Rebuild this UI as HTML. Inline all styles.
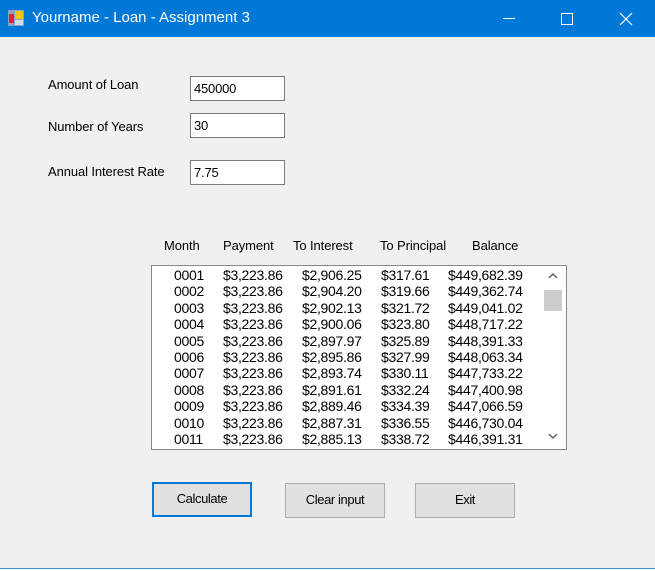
<!DOCTYPE html>
<html><head><style>
body{margin:0;width:655px;height:571px;overflow:hidden;background:#f0f0f0;position:relative;font-family:"Liberation Sans",sans-serif;color:#000}
.a{position:absolute}
.tb{background:#0078d7;left:0;top:0;width:655px;height:37px}
.lbl{font-size:13px;letter-spacing:-0.1px}
.in{background:#fff;border:1px solid #7a7a7a;width:95px;box-sizing:border-box;font-size:13px;padding:4px 0 0 3px;letter-spacing:-0.2px}
.btn{background:#e1e1e1;border:1px solid #adadad;box-sizing:border-box;width:100px;height:35px;font-size:13px;text-align:center;line-height:32px;letter-spacing:-0.4px}
.row{position:absolute;font-size:14px;line-height:16.4px;letter-spacing:-0.3px;white-space:pre}
</style></head><body>
<div class="a tb"></div>
<svg class="a" style="left:7px;top:9px" width="18" height="18" viewBox="0 0 18 18"><rect x="1" y="1" width="16" height="16" fill="#8aa3c8"/><rect x="2" y="5" width="5" height="9" fill="#d23"/><rect x="8" y="2" width="8" height="8" fill="#f7c600"/><rect x="8" y="11" width="8" height="5" fill="#cde"/></svg>
<div class="a" style="left:32px;top:9px;color:#fff;font-size:15px">Yourname - Loan - Assignment 3</div>
<div class="a" style="left:503px;top:18px;width:12px;height:1px;background:#fff"></div>
<div class="a" style="left:561px;top:13px;width:10px;height:10px;border:1px solid #fff"></div>
<svg class="a" style="left:619px;top:12px" width="14" height="14"><path d="M1 1L13 13M13 1L1 13" stroke="#fff" stroke-width="1.2"/></svg>

<div class="a lbl" style="left:48px;top:77px">Amount of Loan</div>
<div class="a lbl" style="left:48px;top:119px">Number of Years</div>
<div class="a lbl" style="left:48px;top:164px">Annual Interest Rate</div>
<div class="a in" style="left:190px;top:76px;height:25px">450000</div>
<div class="a in" style="left:190px;top:113px;height:25px">30</div>
<div class="a in" style="left:190px;top:160px;height:25px">7.75</div>

<div class="a lbl" style="left:164px;top:238px">Month</div>
<div class="a lbl" style="left:223px;top:238px">Payment</div>
<div class="a lbl" style="left:293px;top:238px">To Interest</div>
<div class="a lbl" style="left:380px;top:238px">To Principal</div>
<div class="a lbl" style="left:472px;top:238px">Balance</div>

<div class="a" style="left:151px;top:265px;width:416px;height:185px;background:#fff;border:1px solid #828790;box-sizing:border-box"></div>
<div class="a" style="left:543px;top:266px;width:20px;height:183px;background:#fff"></div>
<svg class="a" style="left:548px;top:272px" width="10" height="8"><path d="M1 6L5 2L9 6" stroke="#606060" fill="none" stroke-width="1.5"/></svg>
<div class="a" style="left:544px;top:290px;width:18px;height:21px;background:#cdcdcd"></div>
<svg class="a" style="left:548px;top:432px" width="10" height="8"><path d="M1 2L5 6L9 2" stroke="#606060" fill="none" stroke-width="1.5"/></svg>
<div class="row" style="left:174px;top:267px">0001
0002
0003
0004
0005
0006
0007
0008
0009
0010
0011</div>
<div class="row" style="left:223px;top:267px">$3,223.86
$3,223.86
$3,223.86
$3,223.86
$3,223.86
$3,223.86
$3,223.86
$3,223.86
$3,223.86
$3,223.86
$3,223.86</div>
<div class="row" style="left:302px;top:267px">$2,906.25
$2,904.20
$2,902.13
$2,900.06
$2,897.97
$2,895.86
$2,893.74
$2,891.61
$2,889.46
$2,887.31
$2,885.13</div>
<div class="row" style="left:381px;top:267px">$317.61
$319.66
$321.72
$323.80
$325.89
$327.99
$330.11
$332.24
$334.39
$336.55
$338.72</div>
<div class="row" style="left:448px;top:267px">$449,682.39
$449,362.74
$449,041.02
$448,717.22
$448,391.33
$448,063.34
$447,733.22
$447,400.98
$447,066.59
$446,730.04
$446,391.31</div>

<div class="a btn" style="left:152px;top:482px;border:2px solid #0078d7;line-height:30px">Calculate</div>
<div class="a btn" style="left:285px;top:483px">Clear input</div>
<div class="a btn" style="left:415px;top:483px">Exit</div>

<div class="a" style="left:0;top:568px;width:655px;height:1px;background:#3c8fd8"></div>
<div class="a" style="left:0;top:569px;width:655px;height:2px;background:#fff"></div>
</body></html>
